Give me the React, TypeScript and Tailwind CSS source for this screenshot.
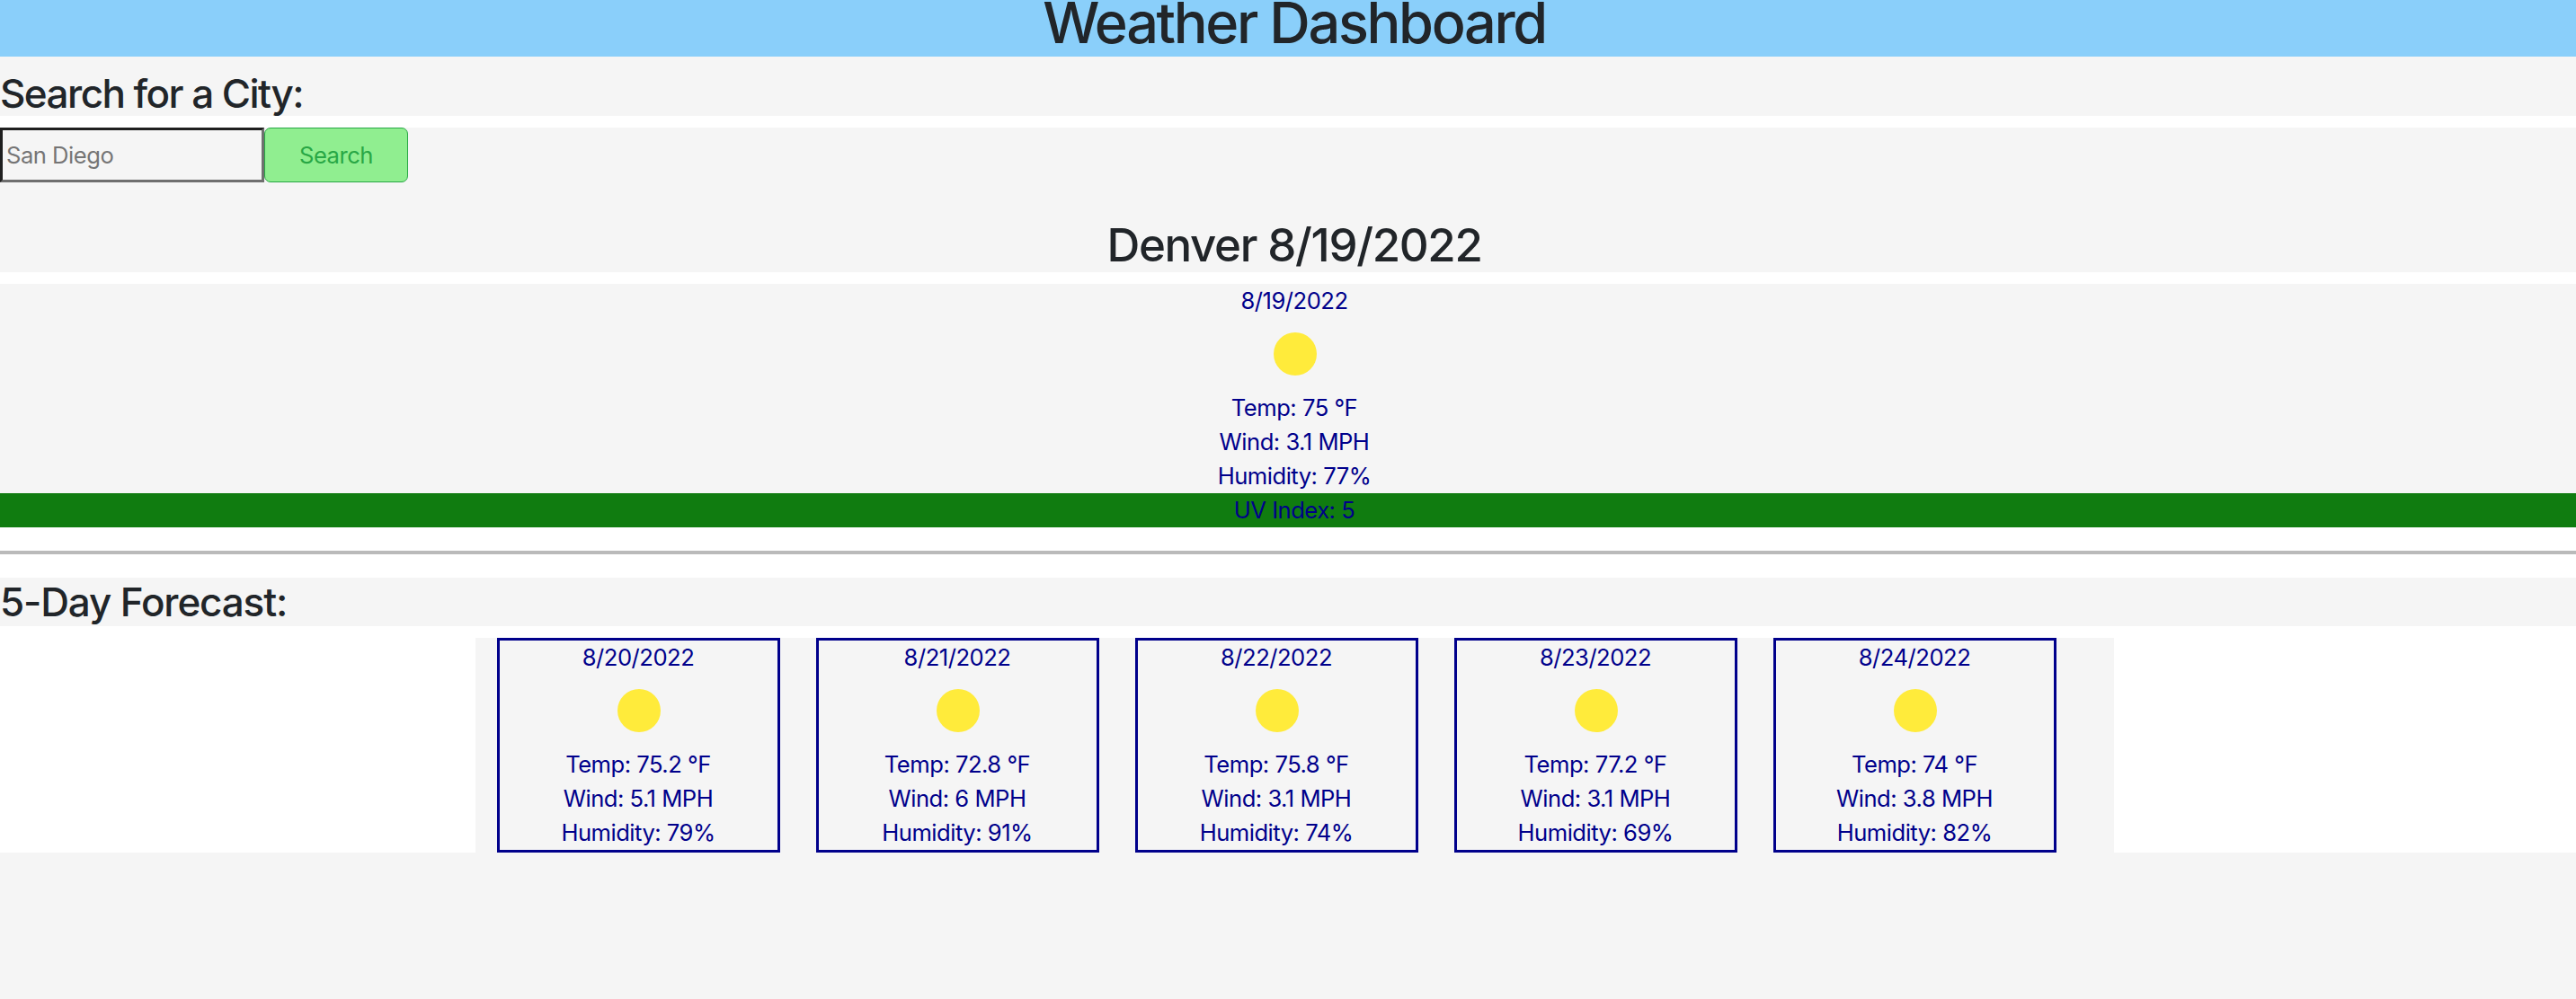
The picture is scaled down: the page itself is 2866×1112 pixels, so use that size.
const current = {
  date: '8/19/2022',
  lines: ['Temp: 75 °F', 'Wind: 3.1 MPH', 'Humidity: 77%'],
  uv: 'UV Index: 5',
};

const forecast = [
  { date: '8/20/2022', temp: '75.2', wind: '5.1', humidity: '79' },
  { date: '8/21/2022', temp: '72.8', wind: '6', humidity: '91' },
  { date: '8/22/2022', temp: '75.8', wind: '3.1', humidity: '74' },
  { date: '8/23/2022', temp: '77.2', wind: '3.1', humidity: '69' },
  { date: '8/24/2022', temp: '74', wind: '3.8', humidity: '82' },
];

function Sun() {
  return (
    <div className="flex h-[81px] items-center justify-center pb-[1px] pl-[2px]">
      <div className="h-[48px] w-[48px] rounded-full bg-[#ffeb3b]" />
    </div>
  );
}

export default function App() {
  return (
    <div className="min-h-screen overflow-hidden bg-white">
      {/* the page is a bit wider than the window, so centred things sit right of the middle */}
      <div className="flex min-h-screen w-[2880px] flex-col font-['Inter',sans-serif] text-[25.6px] leading-[38px] tracking-[-0.5px] text-[#212529]">
        <header className="h-[63px] bg-[#8acffa] text-center text-[63px] font-medium leading-[51px] tracking-[-2.35px]">
          Weather Dashboard
        </header>

        <h2 className="h-[66px] bg-[#f5f5f5] pt-[13px] text-[44px] font-medium leading-[56px] tracking-[-1.55px]">
          Search for a City:
        </h2>

        <section className="mt-[13px] h-[161px] bg-[#f5f5f5]">
          <form className="flex h-[61px]">
            <input
              placeholder="San Diego"
              className="h-[61px] w-[294px] border-[3px] border-t-[#1f1f1f] border-l-[#1f1f1f] border-r-[#6f6f6f] border-b-[#6f6f6f] bg-[#f5f5f5] px-[4px] text-[25.6px] outline-none placeholder:text-[#757575]"
            />
            <button
              type="button"
              className="h-[61px] w-[160px] rounded-[7px] border-[1.5px] border-[#28a745] bg-[#90ee90] text-[25.6px] text-[#28a745]"
            >
              Search
            </button>
          </form>
          <h2 className="mt-[38px] text-center text-[51px] font-medium leading-[64px] tracking-[-1.35px]">
            Denver 8/19/2022
          </h2>
        </section>

        <section className="mt-[13px] bg-[#f5f5f5] text-center text-[#00008b]">
          <p>{current.date}</p>
          <Sun />
          {current.lines.map((line) => (
            <p key={line}>{line}</p>
          ))}
          <p className="bg-[#107c10]">{current.uv}</p>
        </section>

        <hr className="mt-[26px] h-[4px] border-0 bg-[#bababa]" />

        <h2 className="mt-[26px] h-[54px] bg-[#f5f5f5] text-[44px] font-medium leading-[54px] tracking-[-1.15px]">
          5-Day Forecast:
        </h2>

        <div className="mt-[13px] flex justify-center">
          <div className="flex h-[239px] w-[1823px] gap-[40px] bg-[#f5f5f5] pl-[24px] pr-[64px]">
            {forecast.map((day) => (
              <div key={day.date} className="h-[239px] w-[315px] border-[3px] border-[#00008b] text-center text-[#00008b]">
                <p>{day.date}</p>
                <Sun />
                <p>Temp: {day.temp} °F</p>
                <p>Wind: {day.wind} MPH</p>
                <p>Humidity: {day.humidity}%</p>
              </div>
            ))}
          </div>
        </div>

        <div className="flex-1 bg-[#f5f5f5]" />
      </div>
    </div>
  );
}
